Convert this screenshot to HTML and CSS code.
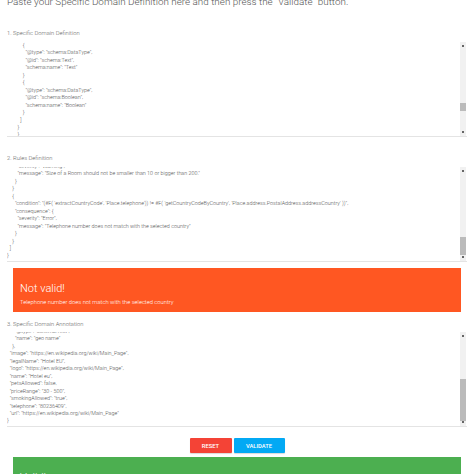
FILE: index.html
```html
<!DOCTYPE html>
<html lang="en">
<head>
    <meta charset="UTF-8">
    <title>Validator</title>
    <link rel="stylesheet" href="styles.css">
</head>
<body>
    <h1 class="intro">Paste your Specific Domain Definition here and then press the "Validate" button.</h1>

    <section class="field field-domain">
        <label>1. Specific Domain Definition</label>
        <div class="editor">
<pre class="code">            {
              "@type": "schema:DataType",
              "@id": "schema:Text",
              "schema:name": "Text"
            }
            {
              "@type": "schema:DataType",
              "@id": "schema:Boolean",
              "schema:name": "Boolean"
            }
          ]
        }
        }</pre>
            <div class="scrollbar">
                <span class="arrow"></span>
                <span class="thumb thumb-domain"></span>
                <span class="arrow"></span>
            </div>
        </div>
    </section>

    <section class="field field-rules">
        <label>2. Rules Definition</label>
        <div class="editor">
<pre class="code code-rules">        "severity": "Warning",
        "message": "Size of a Room should not be smaller than 10 or bigger than 200."
      }
    }
    {
      "condition": "(#F( 'extractCountryCode', 'Place.telephone')) != #F( 'getCountryCodeByCountry', 'Place.address.PostalAddress.addressCountry' ))",
      "consequence": {
        "severity": "Error",
        "message": "Telephone number does not match with the selected country"
      }
    }
  ]
}</pre>
            <div class="scrollbar">
                <span class="arrow"></span>
                <span class="thumb thumb-rules"></span>
                <span class="arrow"></span>
            </div>
        </div>
    </section>

    <div class="alert alert-error">
        <h2>Not valid!</h2>
        <p>Telephone number does not match with the selected country</p>
    </div>

    <section class="field field-annotation">
        <label>3. Specific Domain Annotation</label>
        <div class="editor">
<pre class="code code-annotation">      "@type": "schema:Text",
      "name": "geo name"
    },
  "image": "https://en.wikipedia.org/wiki/Main_Page",
  "legalName": "Hotel EU",
  "logo": "https://en.wikipedia.org/wiki/Main_Page",
  "name": "Hotel eu",
  "petsAllowed": false,
  "priceRange": "30 - 500",
  "smokingAllowed": "true",
  "telephone": "80236409",
  "url": "https://en.wikipedia.org/wiki/Main_Page"
}</pre>
            <div class="scrollbar">
                <span class="arrow"></span>
                <span class="thumb thumb-annotation"></span>
                <span class="arrow"></span>
            </div>
        </div>
    </section>

    <div class="actions">
        <button class="btn btn-reset">RESET</button>
        <button class="btn btn-validate">VALIDATE</button>
    </div>

    <div class="alert alert-success">
        <h2>Valid!</h2>
    </div>
</body>
</html>
```

FILE: styles.css
```css
html, body {
    height: 474px;
    overflow: hidden;
}

body {
    margin: 0;
    padding: 0 7px;
    background-color: #fff;
    color: #555;
    font-family: Roboto, "Liberation Sans", sans-serif;
    font-weight: 300;
}

.intro {
    margin: -5px 0 0;
    font-size: 9.9px;
    line-height: 14px;
    font-weight: 300;
    color: #555;
}

.field label {
    display: block;
    margin-bottom: 5px;
    font-size: 5.8px;
    line-height: 8px;
    color: #666;
}

.field-domain {
    margin-top: 20px;
}

.field-rules {
    margin-top: 17px;
}

.field-annotation {
    margin-top: 8px;
}

.field-annotation label {
    margin-bottom: 4px;
}

.editor {
    display: flex;
    height: 95px;
    box-sizing: border-box;
    overflow: hidden;
    border-bottom: 1px solid #e4e4e4;
}

.code {
    flex: 1;
    margin: 0;
    font-family: Roboto, "Liberation Sans", sans-serif;
    font-size: 5.4px;
    line-height: 7.45px;
    font-weight: 300;
    color: #555;
    overflow: hidden;
}

.code-rules,
.code-annotation {
    margin-top: -4px;
}

.scrollbar {
    display: flex;
    flex-direction: column;
    align-items: center;
    justify-content: space-between;
    width: 6px;
    padding: 3px 0;
    margin-right: 1px;
    background-color: #f1f1f1;
    position: relative;
}

.arrow {
    width: 2px;
    height: 2px;
    background-color: #666;
}

.thumb {
    position: absolute;
    left: 0;
    width: 6px;
    background-color: #bbb;
}

.thumb-domain {
    top: 61px;
    height: 8px;
}

.thumb-rules {
    top: 70px;
    height: 18px;
}

.thumb-annotation {
    top: 47px;
    height: 42px;
}

.alert {
    margin: 0 6px;
    color: #fff;
}

.alert h2 {
    margin: 0;
    font-size: 11px;
    line-height: 12px;
    font-weight: 300;
}

.alert p {
    margin: 3px 0 0;
    font-size: 5.8px;
    line-height: 8px;
}

.alert-error {
    margin-top: 6px;
    height: 44px;
    padding: 15px 7px 0;
    box-sizing: border-box;
    background-color: #ff5722;
}

.alert-success {
    margin-top: 4px;
    height: 44px;
    padding: 15px 7px 0;
    box-sizing: border-box;
    background-color: #4caf50;
}

.actions {
    display: flex;
    justify-content: center;
    gap: 2px;
    margin-top: 11px;
}

.btn {
    height: 15px;
    padding: 0;
    border: none;
    border-radius: 1px;
    color: #fff;
    font-family: Roboto, "Liberation Sans", sans-serif;
    font-size: 5.8px;
    font-weight: 500;
    box-shadow: 0 1px 1px rgba(0, 0, 0, 0.15);
}

.btn-reset {
    width: 42px;
    background-color: #f44336;
}

.btn-validate {
    width: 51px;
    background-color: #03a9f4;
}
```
